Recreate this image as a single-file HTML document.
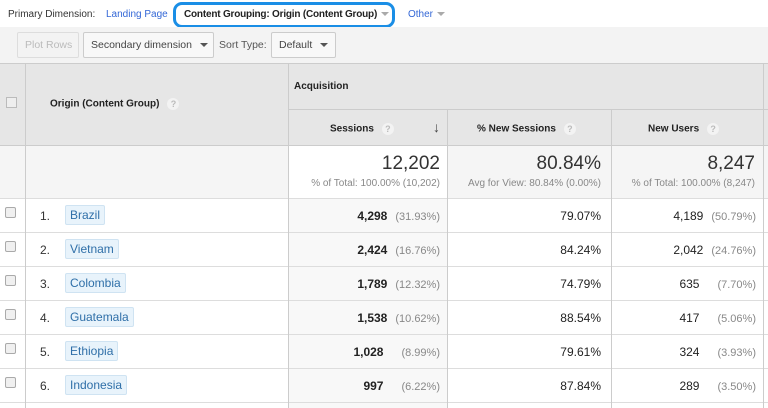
<!DOCTYPE html>
<html><head><style>
*{box-sizing:border-box;margin:0;padding:0}
body{width:768px;height:408px;overflow:hidden;background:#fff;font-family:"Liberation Sans",sans-serif;color:#222;position:relative;font-size:11px}
.a{position:absolute;white-space:nowrap}
.hl{position:absolute;height:1px;background:#ddd}
.vl{position:absolute;width:1px;background:#ccc}
.q{display:inline-block;width:12px;height:12px;border-radius:50%;background:#f3f3f3;color:#bbb;font-size:9px;text-align:center;line-height:12px;margin-left:8px;vertical-align:middle}
.btn{position:absolute;top:32px;height:26px;border:1px solid #ccc;border-radius:2px;background:#f8f8f8;font-size:10.5px;line-height:24px;padding:0 7px;color:#444;white-space:nowrap}
.tri{display:inline-block;width:0;height:0;border-left:4px solid transparent;border-right:4px solid transparent;border-top:4px solid #555;vertical-align:middle;margin-left:8px}
.cb{position:absolute;left:5px;width:11px;height:11px;border:1px solid #aaa;border-radius:2px;background:#f0f0f0}
.num{position:absolute;left:40px;font-size:12px;color:#333}
.tag{position:absolute;left:65px;height:20px;padding:0 4px;background:#e8f3fb;border:1px solid #cfe3f2;border-radius:2px;color:#2f6fa8;font-size:12px;line-height:18px;white-space:nowrap}
.r{position:absolute;text-align:right;font-size:12px;color:#222;white-space:nowrap}
.p{color:#888;font-size:11px;margin-left:8px}
</style></head><body>
<div class="a" style="left:8px;top:9px;font-size:10px;color:#333">Primary Dimension:</div>
<div class="a" style="left:106px;top:9px;font-size:10px;color:#3367d6">Landing Page</div>
<div class="a" style="left:173px;top:2px;width:222px;height:26px;border:3px solid #1a8ee6;border-radius:9px"></div>
<div class="a" style="left:184px;top:9px;font-size:10px;color:#222;font-weight:bold;letter-spacing:-0.2px">Content Grouping: Origin (Content Group)<span class="tri" style="border-top-color:#aaa;margin-left:4px"></span></div>
<div class="a" style="left:408px;top:9px;font-size:10px;color:#3367d6">Other<span class="tri" style="border-top-color:#aaa;margin-left:4px"></span></div>
<div class="a" style="left:0;top:27px;width:768px;height:36px;background:#f3f3f3"></div>
<div class="btn" style="left:17px;width:62px;color:#bbb;background:#f3f3f3;border-color:#ddd">Plot Rows</div>
<div class="btn" style="left:83px;width:131px">Secondary dimension<span class="tri"></span></div>
<div class="a" style="left:219px;top:39px;color:#555;font-size:10.5px">Sort Type:</div>
<div class="btn" style="left:271px;width:65px">Default<span class="tri"></span></div>
<!-- header -->
<div class="a" style="left:0;top:63px;width:768px;height:82px;background:#e6e6e6;border-top:1px solid #ccc"></div>
<div class="a" style="left:0;top:145px;width:768px;height:53px;background:#f5f5f5"></div>
<div class="a" style="left:288px;top:145px;width:159px;height:53px;background:#fff"></div>
<div class="a" style="left:288px;top:198px;width:159px;height:210px;background:#f8f8f8"></div>
<div class="hl" style="left:288px;top:109px;width:480px;background:#ccc"></div>
<div class="hl" style="left:0;top:145px;width:768px;background:#ccc"></div>
<div class="hl" style="left:0;top:198px;width:768px"></div>
<div class="hl" style="left:0;top:232px;width:768px"></div>
<div class="hl" style="left:0;top:266px;width:768px"></div>
<div class="hl" style="left:0;top:300px;width:768px"></div>
<div class="hl" style="left:0;top:334px;width:768px"></div>
<div class="hl" style="left:0;top:368px;width:768px"></div>
<div class="hl" style="left:0;top:402px;width:768px"></div>
<div class="vl" style="left:25px;top:63px;height:345px"></div>
<div class="vl" style="left:288px;top:63px;height:345px"></div>
<div class="vl" style="left:447px;top:109px;height:299px"></div>
<div class="vl" style="left:611px;top:109px;height:299px"></div>
<div class="vl" style="left:763px;top:63px;height:345px"></div>
<div class="a" style="left:6px;top:97px;width:11px;height:11px;border:1px solid #bbb;background:#eee"></div>
<div class="a" style="left:50px;top:98px;font-weight:bold;font-size:10px">Origin (Content Group)<span class="q">?</span></div>
<div class="a" style="left:294px;top:81px;font-weight:bold;font-size:10px">Acquisition</div>
<div class="a" style="left:330px;top:123px;font-weight:bold;font-size:10px">Sessions<span class="q">?</span></div>
<div class="a" style="left:433px;top:119px;font-size:14px;color:#444">↓</div>
<div class="a" style="left:477px;top:123px;font-weight:bold;font-size:10px">% New Sessions<span class="q">?</span></div>
<div class="a" style="left:648px;top:123px;font-weight:bold;font-size:10px">New Users<span class="q">?</span></div>
<div class="r" style="left:288px;width:152px;top:153px;font-size:19px;color:#333">12,202</div>
<div class="r" style="left:280px;width:160px;top:178px;font-size:10px;color:#888">% of Total: 100.00% (10,202)</div>
<div class="r" style="left:447px;width:154px;top:153px;font-size:19px;color:#333">80.84%</div>
<div class="r" style="left:447px;width:154px;top:178px;font-size:10px;color:#888">Avg for View: 80.84% (0.00%)</div>
<div class="r" style="left:611px;width:144px;top:153px;font-size:19px;color:#333">8,247</div>
<div class="r" style="left:611px;width:144px;top:178px;font-size:10px;color:#888">% of Total: 100.00% (8,247)</div>

<div class="cb" style="top:207px"></div><div class="num" style="top:209px">1.</div><div class="tag" style="top:205px">Brazil</div>
<div class="r" style="left:288px;width:152px;top:209px"><b>4,298</b><span class="p">(31.93%)</span></div>
<div class="r" style="left:447px;width:154px;top:209px">79.07%</div>
<div class="r" style="left:611px;width:145px;top:209px">4,189<span class="p">(50.79%)</span></div>

<div class="cb" style="top:241px"></div><div class="num" style="top:243px">2.</div><div class="tag" style="top:239px">Vietnam</div>
<div class="r" style="left:288px;width:152px;top:243px"><b>2,424</b><span class="p">(16.76%)</span></div>
<div class="r" style="left:447px;width:154px;top:243px">84.24%</div>
<div class="r" style="left:611px;width:145px;top:243px">2,042<span class="p">(24.76%)</span></div>

<div class="cb" style="top:275px"></div><div class="num" style="top:277px">3.</div><div class="tag" style="top:273px">Colombia</div>
<div class="r" style="left:288px;width:152px;top:277px"><b>1,789</b><span class="p">(12.32%)</span></div>
<div class="r" style="left:447px;width:154px;top:277px">74.79%</div>
<div class="r" style="left:611px;width:145px;top:277px">635<span class="p" style="margin-left:18px">(7.70%)</span></div>

<div class="cb" style="top:309px"></div><div class="num" style="top:311px">4.</div><div class="tag" style="top:307px">Guatemala</div>
<div class="r" style="left:288px;width:152px;top:311px"><b>1,538</b><span class="p">(10.62%)</span></div>
<div class="r" style="left:447px;width:154px;top:311px">88.54%</div>
<div class="r" style="left:611px;width:145px;top:311px">417<span class="p" style="margin-left:18px">(5.06%)</span></div>

<div class="cb" style="top:343px"></div><div class="num" style="top:345px">5.</div><div class="tag" style="top:341px">Ethiopia</div>
<div class="r" style="left:288px;width:152px;top:345px"><b>1,028</b><span class="p" style="margin-left:18px">(8.99%)</span></div>
<div class="r" style="left:447px;width:154px;top:345px">79.61%</div>
<div class="r" style="left:611px;width:145px;top:345px">324<span class="p" style="margin-left:18px">(3.93%)</span></div>

<div class="cb" style="top:377px"></div><div class="num" style="top:379px">6.</div><div class="tag" style="top:375px">Indonesia</div>
<div class="r" style="left:288px;width:152px;top:379px"><b>997</b><span class="p" style="margin-left:18px">(6.22%)</span></div>
<div class="r" style="left:447px;width:154px;top:379px">87.84%</div>
<div class="r" style="left:611px;width:145px;top:379px">289<span class="p" style="margin-left:18px">(3.50%)</span></div>
</body></html>
